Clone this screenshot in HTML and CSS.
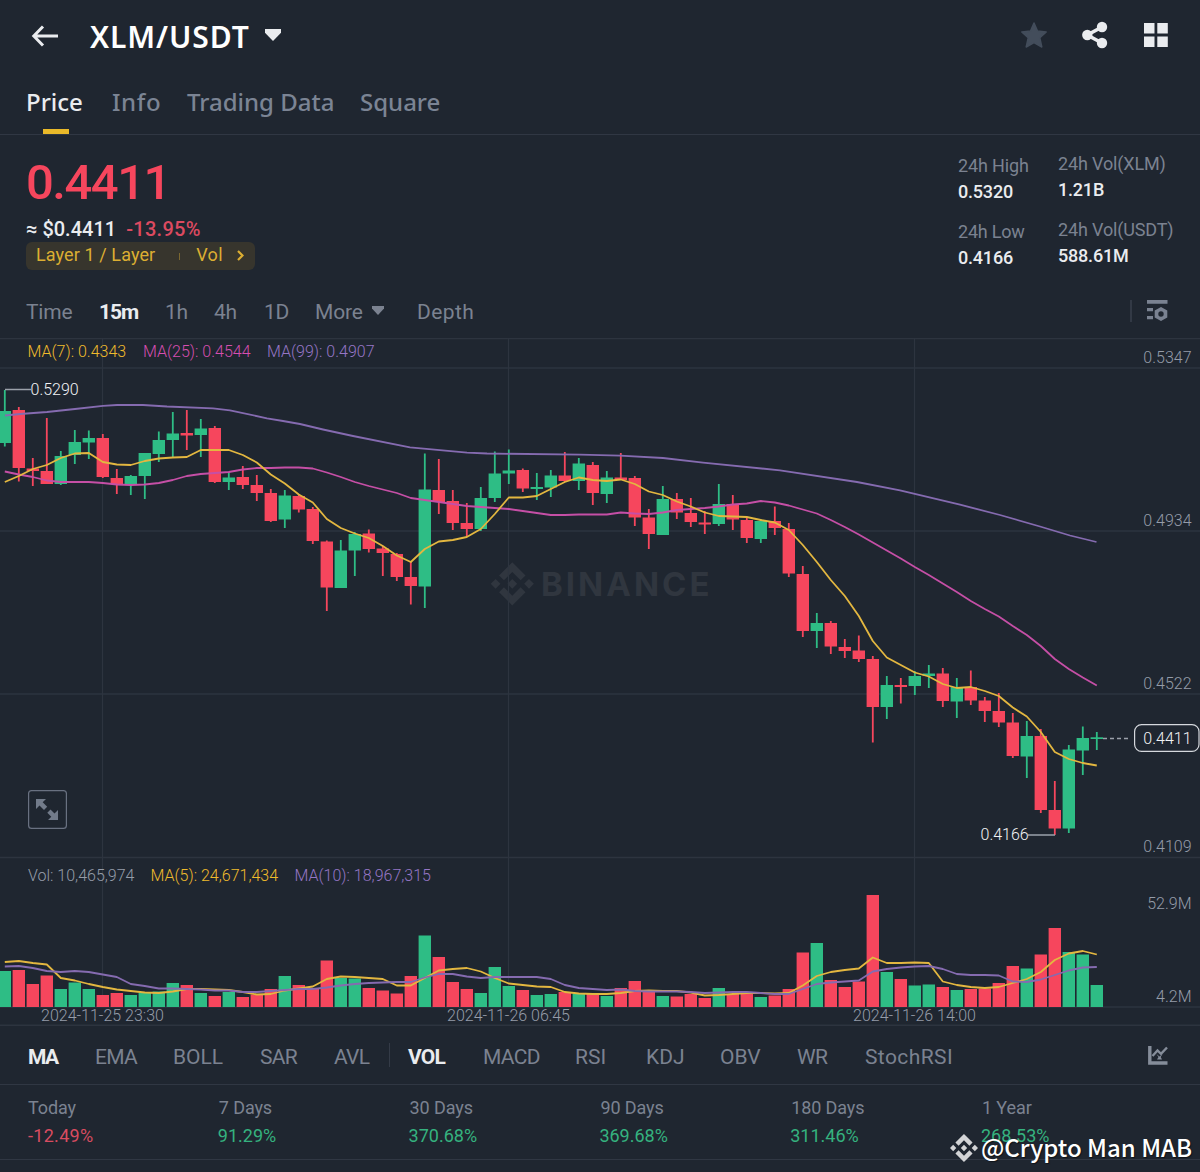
FILE: index.html
```html
<!DOCTYPE html>
<html lang="en">
<head>
    <meta charset="UTF-8">
    <meta name="viewport" content="width=device-width, initial-scale=1.0">
    <title>XLM/USDT</title>
    <link rel="stylesheet" href="styles.css">
</head>
<body>
    <header class="topbar">
        <svg class="back" width="28" height="22" viewBox="0 0 28 22"><path d="M12 1.5L2.8 11l9.2 9.5M3 11h24" fill="none" stroke="currentColor" stroke-width="3"/></svg>
        <h1 class="pair">XLM/USDT</h1>
        <svg class="pair-caret" width="16" height="12" viewBox="0 0 16 12"><path d="M0 0h16v3.8L8 12 0 3.8z" fill="currentColor"/></svg>
        <div class="actions">
            <svg class="star" width="28" height="28" viewBox="0 0 28 28"><path d="M14 2l3.5 8 8.7.9-6.4 5.9 2 9.2L14 21.700l-7.800 4.300 2-9.200-6.400-5.900 8.700-.9z" fill="currentColor" stroke="currentColor" stroke-width="1.500" stroke-linejoin="round"/></svg>
            <svg width="26" height="28" viewBox="0 0 26 28"><path d="M20 6L5.300 14 20 22" fill="none" stroke="currentColor" stroke-width="3.600"/><circle cx="20" cy="6" r="5.200" fill="currentColor"/><circle cx="5.300" cy="14" r="5.200" fill="currentColor"/><circle cx="20" cy="22" r="5.200" fill="currentColor"/></svg>
            <svg width="24" height="24" viewBox="0 0 24 24"><path d="M0 0h10.500v10.500H0zM13.300 0h10.500v10.500H13.300zM0 13.500h10.500V24H0zM13.300 13.500h10.500V24H13.300z" fill="currentColor"/></svg>
        </div>
    </header>

    <nav class="tabs">
        <a class="tab active">Price</a>
        <a class="tab tab-info">Info</a>
        <a class="tab">Trading Data</a>
        <a class="tab">Square</a>
    </nav>

    <section class="summary">
        <div class="quote">
            <div class="last">0.4411</div>
            <div class="fiat"><span>≈ $0.4411</span><span class="change">-13.95%</span></div>
            <div class="tags">
                <span class="tag-name">Layer 1 / Layer</span>
                <span class="tag-sep"></span>
                <span class="tag-vol">Vol</span>
                <svg width="7" height="11" viewBox="0 0 7 11"><path d="M1 1l4.500 4.500L1 10" fill="none" stroke="currentColor" stroke-width="2.200"/></svg>
            </div>
        </div>
        <div class="stats">
            <dl>
                <dt>24h High</dt><dd>0.5320</dd>
                <dt class="tight">24h Low</dt><dd>0.4166</dd>
            </dl>
            <dl class="volumes">
                <dt>24h Vol(XLM)</dt><dd>1.21B</dd>
                <dt>24h Vol(USDT)</dt><dd>588.61M</dd>
            </dl>
        </div>
    </section>

    <nav class="intervals">
        <a>Time</a>
        <a class="active">15m</a>
        <a>1h</a>
        <a>4h</a>
        <a>1D</a>
        <a>More<svg class="more-caret" width="12" height="9" viewBox="0 0 12 9"><path d="M0 0h12v2.500L6 9 0 2.500z" fill="currentColor"/></svg></a>
        <a class="depth">Depth</a>
        <div class="chart-settings">
            <svg width="21" height="22" viewBox="0 0 21 22"><path d="M0 0h20.500v3.800H0zM0 8h6v3.300H0zM0 16h6v3.300H0z" fill="currentColor"/><path fill-rule="evenodd" d="M14 7l6.300 3.500v7L14 21l-6.300-3.500v-7zM14 11.300a2.700 2.700 0 1 0 0 5.400 2.700 2.700 0 0 0 0-5.400z" fill="currentColor"/></svg>
        </div>
    </nav>

    <svg class="chart" id="chart" viewBox="0 338 1200 688"></svg>

    <nav class="indicators">
        <a class="active">MA</a>
        <a>EMA</a>
        <a class="boll">BOLL</a>
        <a>SAR</a>
        <a>AVL</a>
        <span class="divider"></span>
        <a class="active vol">VOL</a>
        <a>MACD</a>
        <a class="boll">RSI</a>
        <a class="boll">KDJ</a>
        <a class="boll">OBV</a>
        <a>WR</a>
        <a class="wide">StochRSI</a>
        <svg class="indicator-icon" width="20" height="19" viewBox="0 0 20 19"><path d="M1.800 0v17h17.700" fill="none" stroke="currentColor" stroke-width="3.400"/><path d="M4.500 10L9.500 4.500l3.500 3.300L19 1.500" fill="none" stroke="currentColor" stroke-width="2.400"/><path d="M8.500 8l3 2.500 3-2.500-1.800 3L14 13.500H9l1.500-2.500z" fill="currentColor"/></svg>
    </nav>

    <section class="performance">
        <div><span>Today</span><b class="down">-12.49%</b></div>
        <div><span>7 Days</span><b>91.29%</b></div>
        <div><span>30 Days</span><b>370.68%</b></div>
        <div><span>90 Days</span><b>369.68%</b></div>
        <div><span>180 Days</span><b>311.46%</b></div>
        <div><span>1 Year</span><b>268.53%</b></div>
    </section>

    <div class="author">
        <svg width="28" height="28" viewBox="0 0 24 24"><path d="M16.624 13.9202l2.7175 2.7154-7.353 7.353-7.353-7.352 2.7175-2.7164 4.6355 4.6595 4.6356-4.6595zm4.6366-4.6366L24 12l-2.7154 2.7164L18.5682 12l2.6924-2.7164zm-9.272.001l2.7163 2.6914-2.7164 2.7174v-.001L9.2721 12l2.7164-2.7154zm-9.2722-.001L5.4088 12l-2.6914 2.6924L0 12l2.7164-2.7164zM11.9885.0115l7.353 7.329-2.7174 2.7154-4.6356-4.6356-4.6355 4.6595-2.7174-2.7154 7.353-7.353z" fill="currentColor"/></svg>
        <span>@Crypto Man MAB</span>
    </div>

    <script src="chart.js"></script>
</body>
</html>
```
FILE: styles.css
```css
* {
    box-sizing: border-box;
}
body {
    margin: 0;
    height: 1172px;
    overflow: hidden;
    position: relative;
    background: #1f2630;
    color: #eaecef;
    font-family: Roboto, "Liberation Sans", sans-serif;
}
svg {
    display: block;
    flex: none;
}

/* header */
.topbar {
    display: flex;
    align-items: center;
    height: 75px;
    padding: 0 32px 0 31px;
}
.back {
    margin-top: -4px;
}
.pair {
    margin: -3px 0 0 31px;
    width: 162px;
    font-family: "Noto Sans", "Open Sans", sans-serif;
    font-size: 30px;
    font-weight: 600;
    letter-spacing: 0.9px;
    color: #fff;
}
.pair-caret {
    margin: -5px 0 0 13px;
}
.actions {
    display: flex;
    align-items: center;
    gap: 34px;
    margin: -5px 0 0 auto;
}
.actions svg:last-child {
    margin-left: 2px;
}
.star {
    color: #434d5b;
}

/* tabs */
.tabs {
    display: grid;
    grid-template-columns: 86px 75px 173px 100px;
    height: 60px;
    padding-left: 26px;
    border-bottom: 1px solid #303743;
}
.tab {
    position: relative;
    font-family: "Noto Sans", "Open Sans", sans-serif;
    font-size: 24px;
    font-weight: 500;
    line-height: 54px;
    color: #7b8494;
    white-space: nowrap;
}
.tab-info {
    letter-spacing: 0.6px;
}
.tab.active {
    color: #eaecef;
}
.tab.active::after {
    content: "";
    position: absolute;
    left: 17px;
    bottom: 0;
    width: 26px;
    height: 5px;
    background: #e9b929;
}

/* price summary */
.summary {
    display: flex;
    justify-content: space-between;
    height: 150px;
    padding: 0 26px;
}
.quote {
    padding-top: 19px;
}
.last {
    font-size: 49px;
    font-weight: 500;
    line-height: 57px;
    letter-spacing: -1.5px;
    color: #f6465d;
}
.fiat {
    display: flex;
    gap: 10px;
    margin-top: 5px;
    font-size: 20px;
    font-weight: 500;
    line-height: 26px;
}
.change {
    color: #dc4a60;
    letter-spacing: 0.3px;
}
.tags {
    display: flex;
    align-items: center;
    width: 229px;
    height: 28px;
    padding-left: 10px;
    border-radius: 6px;
    background: #37352d;
    color: #dcae32;
    font-size: 18px;
    line-height: 26px;
}
.tag-name,
.tag-vol {
    padding-bottom: 2px;
}
.tag-name {
    letter-spacing: 0.1px;
}
.tag-sep {
    width: 1px;
    height: 7px;
    margin: 0 16px 0 24px;
    background: #7c6830;
}
.tag-vol {
    margin-right: 14px;
    letter-spacing: 0.3px;
}
.tags svg {
    margin-top: -1px;
}
.stats {
    display: grid;
    grid-template-columns: 100px 116px;
    font-size: 18px;
    line-height: 26px;
}
.stats dl {
    margin: 0;
    padding-top: 18px;
}
.stats .volumes {
    padding-top: 16px;
}
.stats dt {
    color: #7b8290;
    letter-spacing: -0.15px;
    white-space: nowrap;
}
.stats dd {
    margin: 0 0 14px;
    font-weight: 500;
    letter-spacing: -0.2px;
}
.stats .tight {
    letter-spacing: -0.2px;
}

/* time intervals */
.intervals {
    display: grid;
    grid-template-columns: 73px 66px 49px 50px 51px 102px 1fr auto;
    height: 53px;
    padding: 0 32px 0 26px;
    font-size: 21px;
    line-height: 54px;
    color: #7b8290;
}
.intervals a {
    letter-spacing: -0.2px;
}
.intervals .active {
    font-weight: 700;
    letter-spacing: -1px;
    color: #eaecef;
}
.intervals .depth {
    letter-spacing: 0.4px;
}
.more-caret {
    display: inline-block;
    margin: 0 0 4px 9px;
}
.chart-settings {
    align-self: center;
    margin-top: -2px;
    padding-left: 15px;
    border-left: 2px solid #323945;
    color: #7a8291;
}

/* chart */
.chart {
    width: 1200px;
    height: 688px;
    font-size: 16px;
    font-weight: 300;
}
.grid {
    stroke: #2d343f;
    stroke-width: 1.5;
}
.grid-v {
    stroke: #2d343f;
    stroke-width: 1.2;
}
.up {
    fill: #2ebd85;
}
.fall {
    fill: #f6465d;
}
.line {
    fill: none;
    stroke-width: 1.8;
    stroke-linejoin: round;
}
.yellow {
    stroke: #e3b740;
}
.pink {
    stroke: #c54fa6;
}
.purple {
    stroke: #856bb0;
}
.t-yellow {
    fill: #efbb2c;
}
.t-pink {
    fill: #d64eb0;
}
.t-purple {
    fill: #9676c6;
}
.t-grey {
    fill: #959ca9;
}
.t-light {
    fill: #f2f3f5;
}
.watermark {
    fill: #30363f;
    font-family: Inter, sans-serif;
    font-size: 33px;
    font-weight: 700;
    letter-spacing: 3px;
}
.marker {
    stroke: #9ba1aa;
    stroke-width: 1.5;
}
.dashed {
    stroke: #9ba1aa;
    stroke-width: 1.3;
    stroke-dasharray: 4 3;
}
.price-box {
    fill: #1f2630;
    stroke: #d5d8dd;
    stroke-width: 1.2;
}
.expand-box {
    fill: none;
    stroke: #697181;
    stroke-width: 1.2;
}
.expand-arrow {
    fill: #727b8a;
}

/* indicators */
.indicators {
    display: grid;
    grid-template-columns: 67px 78px 87px 74px 55px 19px 75px 92px 71px 74px 77px 68px 1fr 20px;
    height: 59px;
    padding: 0 32px 0 28px;
    border-bottom: 1px solid #303743;
    font-size: 21px;
    line-height: 62px;
    letter-spacing: -0.7px;
    color: #7b8290;
}
.indicators .active {
    font-weight: 700;
    letter-spacing: -1.6px;
    color: #eaecef;
}
.indicators .vol {
    letter-spacing: -0.8px;
}
.indicators .boll {
    letter-spacing: 0;
}
.indicators .wide {
    letter-spacing: 0.4px;
}
.divider {
    width: 1px;
    height: 24px;
    margin-top: 17px;
    background: #343b47;
}
.indicator-icon {
    margin-top: 20px;
    color: #858d9a;
}

/* performance */
.performance {
    display: grid;
    grid-template-columns: repeat(6, 190.8px);
    height: 75px;
    padding: 9px 0 0 28px;
    border-bottom: 1px solid #303743;
    font-size: 18px;
    line-height: 28px;
}
.performance span,
.performance b {
    display: block;
}
.performance span {
    color: #7b8290;
    letter-spacing: -0.1px;
}
.performance b {
    margin-left: -1px;
    font-weight: 400;
    color: #35b27f;
}
.performance .down {
    margin-left: 0;
    color: #d84c60;
    letter-spacing: 0.3px;
}

.author {
    position: absolute;
    left: 950px;
    top: 1130px;
    display: flex;
    align-items: center;
    gap: 3px;
    height: 36px;
    font: 500 24px/36px "Noto Sans CJK SC", "Noto Sans", sans-serif;
    color: #fff;
    white-space: nowrap;
    text-shadow: 1px 1px 1px rgba(0, 0, 0, 0.5);
}
.author span {
    margin-top: -2px;
}
.author svg {
    color: #d3d4d6;
}
```
FILE: chart.js
```js
// direction, high, low, body top, body bottom
const candles = [
    ['g', 390, 446.5, 411, 443], ['r', 407, 481.5, 410, 468], ['r', 458, 486, 468.5, 471], ['r', 418, 484, 471, 484],
    ['g', 451, 485, 456, 484], ['g', 430, 464, 442, 455], ['g', 430.5, 459, 438, 442.5], ['r', 434, 478, 438, 477],
    ['r', 469, 494, 478, 484], ['g', 475, 495, 476, 484], ['g', 453, 499, 453, 476], ['g', 431.5, 462, 440, 454],
    ['g', 412, 457, 433.5, 440], ['r', 410, 450, 433, 435.5], ['g', 419, 457, 428.5, 435], ['r', 426, 483, 428, 482],
    ['g', 472, 490, 477.5, 482], ['r', 466, 489, 477, 485], ['r', 475, 501, 485, 493], ['r', 489, 522, 493, 521],
    ['g', 490, 528, 495.5, 519.5], ['r', 494, 512.5, 496, 509.5], ['r', 507, 544, 509, 541], ['r', 540.5, 611, 541.5, 587.5],
    ['g', 540, 588, 550.5, 588], ['g', 532, 576, 534, 550.5], ['r', 529.5, 552.5, 533.5, 549], ['r', 546, 576, 548.5, 553],
    ['r', 553, 581, 554, 577], ['r', 561, 604.5, 577, 586], ['g', 453.5, 608, 489.5, 586.5], ['r', 459, 514, 490, 502],
    ['r', 490, 530, 501, 523], ['r', 503, 536, 523, 529], ['g', 487, 531, 498, 529], ['g', 451.5, 502, 473.5, 498],
    ['g', 449.5, 484, 470.5, 473.5], ['r', 468.5, 492, 470, 488.5], ['g', 473, 500, 487, 489], ['g', 470, 497, 475.5, 487.5],
    ['r', 452, 482, 475.5, 481], ['g', 458, 490, 463.5, 481], ['r', 462, 505, 465, 493], ['g', 471, 503, 477.5, 494],
    ['r', 453, 480, 477.5, 480], ['r', 476, 526, 478, 517.5], ['r', 509, 549, 517.5, 534], ['g', 486, 535, 499, 535],
    ['r', 493, 519, 499, 512.5], ['r', 498, 527, 513, 522], ['r', 511, 534, 522.5, 524.5], ['g', 484, 526, 504, 524],
    ['r', 495, 530, 504, 519.5], ['r', 517, 543, 520, 538], ['g', 519, 543, 521, 539], ['r', 506.5, 535, 521, 528],
    ['r', 523, 577, 529, 573.5], ['r', 566, 637, 574, 631], ['g', 613, 648, 623, 631], ['r', 621, 654, 623, 646.5],
    ['r', 639, 658, 647, 651], ['r', 635.5, 662, 650.5, 659], ['r', 656, 742.5, 659, 707], ['g', 676, 719, 685, 707],
    ['r', 678, 703.5, 685, 687], ['g', 671, 695, 676, 686], ['g', 665, 688, 673.5, 676], ['r', 668, 707, 673.5, 701],
    ['g', 678, 718, 687, 701.5], ['r', 670.5, 705, 687, 700.5], ['r', 697, 722, 700.5, 711], ['r', 693, 727, 711, 722.5],
    ['r', 713, 758, 722.5, 756], ['g', 721, 778, 736, 756.5], ['r', 729, 813, 736, 810], ['r', 781, 835, 810, 828.5],
    ['g', 745, 833, 749.5, 828.5], ['g', 726.5, 775, 738, 750.5], ['g', 732, 750, 737.3, 739]
];

// volume bar tops, one per candle
const volumes = [
    971, 970, 984, 975.5, 989, 982.5, 989, 995, 993, 995, 993, 991.5, 983, 985, 993, 996, 992, 997, 994.5, 989,
    976, 985, 988, 960.5, 978, 978.5, 988, 990.5, 993.5, 976, 935.5, 957, 982, 989, 993, 967, 986, 990, 995, 994,
    992, 994, 993.5, 996, 988, 981, 992, 996, 996.5, 994, 998, 988, 994, 993, 997, 995.5, 989, 952.5, 943, 980,
    987, 981.5, 895, 972, 979, 985.5, 984.5, 987, 990, 989, 988.5, 983, 966, 968.5, 954.5, 928, 952, 954.5, 985
];

const ma7 = [
    482, 476, 469, 465, 458, 453.5, 453, 462, 464.5, 465, 461, 458.5, 457.5, 457, 450, 450, 450, 455, 462.5, 474.5,
    483.5, 494.5, 502.5, 519, 528, 533.5, 538, 546, 555.5, 562, 549, 541.5, 540, 537, 529, 514, 497.5, 497.5, 496, 489,
    482, 477.5, 480, 481, 479.5, 484, 491.5, 495, 501.5, 506.5, 512.5, 516, 516.5, 517, 520, 522.5, 530, 545, 562, 580,
    596, 616, 641, 657.5, 665, 672.5, 676.5, 684, 688, 687, 691, 696, 707.5, 716.5, 732, 752, 759, 763, 765.5
];
const ma25 = [
    471.5, 474.5, 477, 480.5, 482, 482, 482, 483, 484.5, 485, 484.5, 483, 480, 476, 474, 473, 472, 469.5, 468, 468,
    467.5, 467.5, 468.5, 472.5, 477, 482, 486, 489.5, 493, 498, 500, 502, 504, 506, 507, 508, 509, 511, 513, 515,
    515, 514.5, 514.5, 514.5, 512.5, 513.5, 514, 512.5, 510, 509, 508, 506.5, 504.5, 503.5, 501, 502.5, 505.5, 509.5, 513.5, 520,
    527, 534.5, 542.5, 550.5, 558.5, 567, 575, 583.5, 592, 601, 609, 616.5, 626, 635, 646, 659, 669, 677.5, 685.5
];
const ma99 = [
    [5, 415.5], [20, 414], [47, 412], [75, 409], [103, 405.8], [117, 405], [143, 405], [167, 406.5], [213, 408.3],
    [230, 410.3], [267, 418.3], [283, 421], [300, 424], [323, 429.5], [353, 436], [410, 447.3], [467, 452.7],
    [487, 453.5], [580, 454.7], [620, 455.7], [663, 458], [703, 462.7], [780, 470.3], [857, 482], [900, 490.3],
    [960, 504.7], [1000, 515], [1040, 526.5], [1070, 535.5], [1096.5, 542]
];
const volMa5 = [
    962, 961, 963, 964.5, 978, 980.5, 984, 987, 989.5, 991, 992.5, 993, 991.5, 989, 989, 989.5, 990, 992, 994.5, 994,
    990.5, 988.5, 986.5, 979, 976.5, 977, 978, 979, 985.5, 985.5, 978, 970.5, 969, 968, 971.5, 978, 983.5, 985, 986.5, 987,
    992, 993.5, 994, 994, 993, 991, 990.5, 991, 991, 992.5, 995.5, 995, 994, 993, 993, 993.5, 993, 985.5, 976, 972,
    970, 968.5, 957.5, 963, 963, 962.5, 963, 981.5, 985, 987, 988, 987, 983, 979, 972, 960, 953.5, 951, 954.5
];
const volMa10 = [
    966.5, 966, 968, 971, 972, 971, 972, 974.5, 977, 984, 986, 988.5, 988.5, 989, 989.5, 990.5, 990.5, 992, 992, 991,
    990, 989, 989, 987.5, 985.5, 984, 983, 982.5, 982, 982, 977.5, 974, 974, 976.5, 978, 977, 977, 977, 977, 979,
    985, 988, 989, 990, 989.5, 991, 991.5, 991.5, 991.5, 992, 993, 992.5, 992, 992, 993, 994, 994, 989, 984, 982.5,
    981.5, 980.5, 971.5, 969, 967.5, 966.5, 966, 969, 974, 975, 975, 975.5, 981.5, 982, 979.5, 975, 970.5, 967.5, 967
];

const logo = 'M16.624 13.9202l2.7175 2.7154-7.353 7.353-7.353-7.352 2.7175-2.7164 4.6355 4.6595 4.6356-4.6595zm4.6366-4.6366L24 12l-2.7154 2.7164L18.5682 12l2.6924-2.7164zm-9.272.001l2.7163 2.6914-2.7164 2.7174v-.001L9.2721 12l2.7164-2.7154zm-9.2722-.001L5.4088 12l-2.6914 2.6924L0 12l2.7164-2.7164zM11.9885.0115l7.353 7.329-2.7174 2.7154-4.6356-4.6356-4.6355 4.6595-2.7174-2.7154 7.353-7.353z';

const X0 = 4.8;
const STEP = 14;
const BODY = 12.4;
const VOL_BASE = 1007;
const x = i => X0 + i * STEP;

function rect(cls, left, top, width, height) {
    return `<rect class="${cls}" x="${left}" y="${top}" width="${width}" height="${height}"/>`;
}
function text(cls, left, base, str, anchor = 'start') {
    return `<text class="${cls}" x="${left}" y="${base}" text-anchor="${anchor}">${str}</text>`;
}
function line(cls, points) {
    return `<polyline class="line ${cls}" points="${points.map(p => p.join(',')).join(' ')}"/>`;
}
function series(values) {
    return values.map((y, i) => [x(i), y]);
}

let out = '';

// grid and watermark
[338.5, 368, 531, 694, 857.5, 1007, 1025.3].forEach(y => out += `<path class="grid" d="M0 ${y}H1200"/>`);
out += text('watermark', 541, 596, 'BINANCE');
out += `<path class="watermark" transform="translate(490.700 562.200) scale(1.800)" d="${logo}"/>`;
[102.5, 508.5, 914.5].forEach(v => out += `<path class="grid-v" d="M${v} 338V1007"/>`);

// candles and volume bars
candles.forEach(([dir, high, low, top, bottom], i) => {
    const cls = dir === 'g' ? 'up' : 'fall';
    out += rect(cls, x(i) - 0.9, high, 1.8, low - high);
    out += rect(cls, x(i) - BODY / 2, top, BODY, bottom - top);
    out += rect(cls, x(i) - BODY / 2, volumes[i], BODY, VOL_BASE - volumes[i]);
});

out += line('purple', ma99) + line('pink', series(ma25)) + line('yellow', series(ma7));
out += line('yellow', series(volMa5)) + line('purple', series(volMa10));

// legends
out += text('t-yellow', 27.5, 357, 'MA(7): 0.4343');
out += text('t-pink', 143, 357, 'MA(25): 0.4544');
out += text('t-purple', 267, 357, 'MA(99): 0.4907');
out += text('t-grey', 28, 881, 'Vol: 10,465,974');
out += text('t-yellow', 150.5, 881, 'MA(5): 24,671,434');
out += text('t-purple', 294.5, 881, 'MA(10): 18,967,315');

// axes
[['0.5347', 363], ['0.4934', 526], ['0.4522', 689], ['0.4109', 852], ['52.9M', 909], ['4.2M', 1002]]
    .forEach(([label, y]) => out += text('t-grey', 1191.5, y, label, 'end'));
[['2024-11-25 23:30', 102.5], ['2024-11-26 06:45', 508.5], ['2024-11-26 14:00', 914.5]]
    .forEach(([label, cx]) => out += text('t-grey', cx, 1021, label, 'middle'));

// high, low and last price
out += '<path class="marker" d="M5 389.500H31M1028 835H1055"/>';
out += text('t-light', 30.5, 395, '0.5290') + text('t-light', 980.5, 840, '0.4166');
out += '<path class="dashed" d="M1103 738.500H1128"/>';
out += '<rect class="price-box" x="1134.600" y="724.600" width="64.400" height="26.800" rx="7"/>';
out += text('t-light', 1191.5, 744, '0.4411', 'end');

// expand button
out += '<rect class="expand-box" x="28.600" y="790.600" width="37.800" height="37.800" rx="3"/>';
out += '<path class="expand-arrow" d="M36 799h10l-3.300 3.300 4.500 4.500-3.200 3.200-4.500-4.500L36 809zM58 820H48l3.300-3.300-4-4 3.200-3.200 4 4L58 810z"/>';

document.getElementById('chart').innerHTML = out;
```
